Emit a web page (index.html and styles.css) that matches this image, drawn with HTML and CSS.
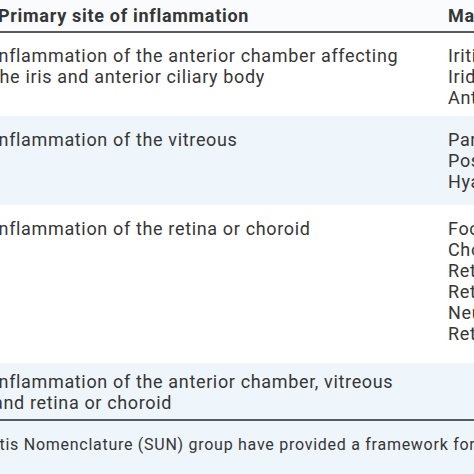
FILE: index.html
```html
<!DOCTYPE html>
<html lang="en">
<head>
<meta charset="utf-8">
<title>SUN classification of uveitis</title>
<link rel="stylesheet" href="styles.css">
</head>
<body>
<div class="viewport">
  <div class="sheet">
    <div class="row head">
      <div class="cell type">Type</div>
      <div class="cell site">Primary site of inflammation</div>
      <div class="cell incl">Manifestations</div>
    </div>
    <div class="row r1">
      <div class="cell type">Anterior uveitis</div>
      <div class="cell site">Inflammation of the anterior chamber affecting the iris and anterior ciliary body</div>
      <div class="cell incl">Iritis<br>Iridocyclitis<br>Anterior cyclitis</div>
    </div>
    <div class="row r2 tint">
      <div class="cell type">Intermediate uveitis</div>
      <div class="cell site">Inflammation of the vitreous</div>
      <div class="cell incl">Pars planitis<br>Posterior cyclitis<br>Hyalitis</div>
    </div>
    <div class="row r3">
      <div class="cell type">Posterior uveitis</div>
      <div class="cell site">Inflammation of the retina or choroid</div>
      <div class="cell incl">Focal, multifocal or diffuse choroiditis<br>Chorioretinitis<br>Retinochoroiditis<br>Retinitis<br>Neuroretinitis<br>Retinal vasculitis</div>
    </div>
    <div class="row r4 tint">
      <div class="cell type">Panuveitis</div>
      <div class="cell site">Inflammation of the anterior chamber, vitreous and retina or choroid</div>
      <div class="cell incl"></div>
    </div>
    <div class="foot tint">
      <p class="note">The Standardization of Uveitis Nomenclature (SUN) group have provided a framework for classifying uveitis by anatomical site</p>
    </div>
  </div>
</div>
</body>
</html>
```
FILE: styles.css
```css
html, body {
  margin: 0;
  padding: 0;
  background: #ffffff;
}
.viewport {
  width: 474px;
  height: 474px;
  overflow: hidden;
}
.sheet {
  width: 1300px;
  margin-left: -254px;
  font-family: Roboto, "Liberation Sans", sans-serif;
  font-size: 18px;
  letter-spacing: 0.65px;
  line-height: 21px;
  color: #363636;
}
.row {
  display: grid;
  grid-template-columns: 247px 455px 1fr;
}
.site {
  padding-right: 36px;
}
.head {
  height: 31px;
  align-items: center;
  font-weight: 700;
  letter-spacing: 0.7px;
  background: #fafbfc;
  border-bottom: 2px solid #5a5a5a;
}
.head .site {
  padding-left: 5px;
}
.tint {
  background: #eef5fb;
}
.r1 { padding: 12px 0 8px; }
.r2 { padding: 13px 0 13px; }
.r3 { padding: 13px 0 19px; }
.r4 { padding: 8px 0 6px; }
.r4 { border-bottom: 2px solid #5a5a5a; }
.foot {
  height: 60px;
  padding-top: 13px;
  box-sizing: border-box;
}
.note {
  margin: 0;
  padding-left: 38px;
  font-size: 16px;
  letter-spacing: 0.73px;
  white-space: nowrap;
}
```
